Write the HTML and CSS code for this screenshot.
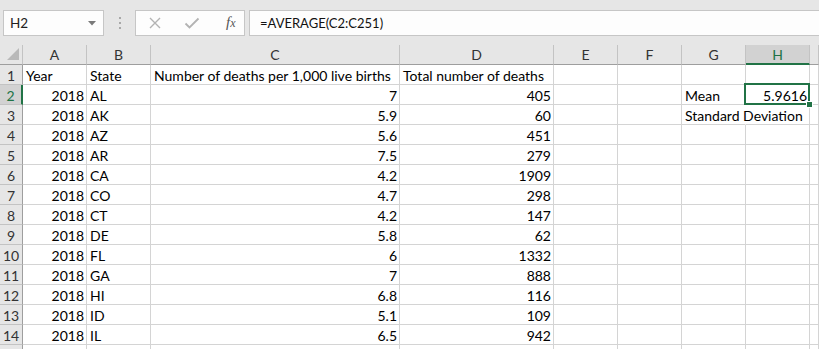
FILE: index.html
```html
<!DOCTYPE html>
<html>
<head>
<meta charset="utf-8">
<link rel="stylesheet" href="styles.css">
</head>
<body>
<div class="app">
  <div class="toolbar">
    <div class="namebox">
      <span class="name">H2</span>
      <svg class="caret" width="8" height="5" viewBox="0 0 8 5"><path d="M0 0h8L4 4.5z" fill="#7a7a7a"/></svg>
    </div>
    <div class="grip"><span></span><span></span><span></span></div>
    <div class="btns">
      <svg class="ico" width="14" height="14" viewBox="0 0 14 14"><path d="M2 2l10 10M12 2L2 12" stroke="#b3b3b3" stroke-width="1.4" fill="none"/></svg>
      <svg class="ico" width="16" height="14" viewBox="0 0 16 14"><path d="M1.5 7.5l4 4L14.5 2.5" stroke="#b3b3b3" stroke-width="1.8" fill="none"/></svg>
      <span class="fx">f<span class="x">x</span></span>
    </div>
    <div class="formula">=AVERAGE(C2:C251)</div>
  </div>
  <div class="sheet">
    <div class="corner"><svg width="14" height="14" viewBox="0 0 14 14"><path d="M13 1V13H1z" fill="#b9b9b9"/></svg></div>
    <div class="ch">A</div><div class="ch">B</div><div class="ch">C</div><div class="ch">D</div><div class="ch">E</div><div class="ch">F</div><div class="ch">G</div><div class="ch sel">H</div><div class="ch"></div>

    <div class="rh">1</div><div class="c">Year</div><div class="c">State</div><div class="c">Number of deaths per 1,000 live births</div><div class="c">Total number of deaths</div><div class="c"></div><div class="c"></div><div class="c"></div><div class="c"></div><div class="c"></div>

    <div class="rh sel">2</div><div class="c n">2018</div><div class="c">AL</div><div class="c n">7</div><div class="c n">405</div><div class="c"></div><div class="c"></div><div class="c">Mean</div><div class="c n active">5.9616</div><div class="c"></div>

    <div class="rh">3</div><div class="c n">2018</div><div class="c">AK</div><div class="c n">5.9</div><div class="c n">60</div><div class="c"></div><div class="c"></div><div class="c over">Standard Deviation</div><div class="c"></div><div class="c"></div>

    <div class="rh">4</div><div class="c n">2018</div><div class="c">AZ</div><div class="c n">5.6</div><div class="c n">451</div><div class="c"></div><div class="c"></div><div class="c"></div><div class="c"></div><div class="c"></div>

    <div class="rh">5</div><div class="c n">2018</div><div class="c">AR</div><div class="c n">7.5</div><div class="c n">279</div><div class="c"></div><div class="c"></div><div class="c"></div><div class="c"></div><div class="c"></div>

    <div class="rh">6</div><div class="c n">2018</div><div class="c">CA</div><div class="c n">4.2</div><div class="c n">1909</div><div class="c"></div><div class="c"></div><div class="c"></div><div class="c"></div><div class="c"></div>

    <div class="rh">7</div><div class="c n">2018</div><div class="c">CO</div><div class="c n">4.7</div><div class="c n">298</div><div class="c"></div><div class="c"></div><div class="c"></div><div class="c"></div><div class="c"></div>

    <div class="rh">8</div><div class="c n">2018</div><div class="c">CT</div><div class="c n">4.2</div><div class="c n">147</div><div class="c"></div><div class="c"></div><div class="c"></div><div class="c"></div><div class="c"></div>

    <div class="rh">9</div><div class="c n">2018</div><div class="c">DE</div><div class="c n">5.8</div><div class="c n">62</div><div class="c"></div><div class="c"></div><div class="c"></div><div class="c"></div><div class="c"></div>

    <div class="rh">10</div><div class="c n">2018</div><div class="c">FL</div><div class="c n">6</div><div class="c n">1332</div><div class="c"></div><div class="c"></div><div class="c"></div><div class="c"></div><div class="c"></div>

    <div class="rh">11</div><div class="c n">2018</div><div class="c">GA</div><div class="c n">7</div><div class="c n">888</div><div class="c"></div><div class="c"></div><div class="c"></div><div class="c"></div><div class="c"></div>

    <div class="rh">12</div><div class="c n">2018</div><div class="c">HI</div><div class="c n">6.8</div><div class="c n">116</div><div class="c"></div><div class="c"></div><div class="c"></div><div class="c"></div><div class="c"></div>

    <div class="rh">13</div><div class="c n">2018</div><div class="c">ID</div><div class="c n">5.1</div><div class="c n">109</div><div class="c"></div><div class="c"></div><div class="c"></div><div class="c"></div><div class="c"></div>

    <div class="rh">14</div><div class="c n">2018</div><div class="c">IL</div><div class="c n">6.5</div><div class="c n">942</div><div class="c"></div><div class="c"></div><div class="c"></div><div class="c"></div><div class="c"></div>

    <div class="rh"></div><div class="c"></div><div class="c"></div><div class="c"></div><div class="c"></div><div class="c"></div><div class="c"></div><div class="c"></div><div class="c"></div><div class="c"></div>
  </div>
</div>
</body>
</html>
```
FILE: styles.css
```css
body{margin:0;background:#fff;font-family:"Lato","Liberation Sans",sans-serif;}
.app{width:819px;height:349px;overflow:hidden;background:#fff;}
.toolbar{height:45px;background:#e6e6e6;display:flex;align-items:center;padding-left:3px;box-sizing:border-box;}
.namebox{width:101px;height:26px;box-sizing:border-box;border:1px solid #c6c6c6;background:#fdfdfd;display:flex;align-items:center;justify-content:space-between;padding:0 7px 0 6px;}
.name{font-size:13.5px;color:#222;}
.caret{margin-top:1px;}
.grip{width:31px;display:flex;flex-direction:column;align-items:center;gap:3px;}
.grip span{width:2px;height:2px;background:#a8a8a8;}
.btns{width:110px;height:26px;box-sizing:border-box;border:1px solid #c6c6c6;background:#fdfdfd;display:flex;align-items:center;padding-left:12px;}
.btns .ico{margin-right:22px;}
.btns .ico+.ico{margin-right:26px;}
.fx{font-family:"Liberation Serif",serif;font-style:italic;font-size:15px;color:#555;}
.fx .x{font-size:12px;}
.formula{flex:1;height:26px;box-sizing:border-box;margin-left:4px;border:1px solid #c6c6c6;border-right:none;background:#fdfdfd;font-size:13px;color:#111;padding-left:10px;line-height:24px;}
.sheet{display:grid;grid-template-columns:23px 64px 64px 249px 154px 64px 64px 64px 64px 1fr;grid-auto-rows:20px;background:#fff;}
.corner,.ch{background:#e6e6e6;border-right:1px solid #c3c3c3;border-bottom:1px solid #9e9e9e;box-sizing:border-box;}
.corner{display:flex;align-items:flex-end;justify-content:flex-end;padding:0 2px 3px 0;}
.ch{font-size:14px;color:#333;text-align:center;line-height:20px;}
.ch.sel{background:#d2d2d2;border-bottom:2px solid #217346;color:#217346;}
.rh{background:#e6e6e6;border-right:1px solid #9e9e9e;border-bottom:1px solid #c3c3c3;box-sizing:border-box;font-size:14px;color:#333;text-align:center;line-height:21px;}
.rh.sel{background:#d2d2d2;border-right:2px solid #217346;color:#217346;}
.c{border-right:1px solid #d4d4d4;border-bottom:1px solid #d4d4d4;box-sizing:border-box;font-size:14px;color:#000;line-height:21px;padding:0 3px;white-space:nowrap;}
.c.n{text-align:right;padding-right:2px;}
.c.over{overflow:visible;border-right-color:transparent;}
.c.active{position:relative;}
.c.active::before{content:"";position:absolute;left:-2px;top:-2px;right:-1px;bottom:-1px;border:2px solid #217346;}
.c.active::after{content:"";position:absolute;right:-4px;bottom:-4px;width:5px;height:5px;background:#217346;border:1px solid #fff;}
```
